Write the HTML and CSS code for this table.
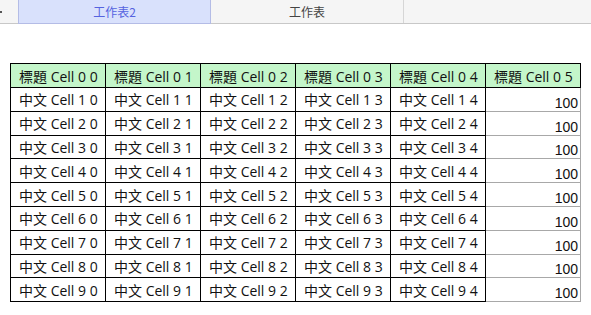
FILE: index.html
```html
<!DOCTYPE html>
<html lang="zh-Hant">
<head>
<meta charset="utf-8">
<link rel="stylesheet" href="styles.css">
</head>
<body>
<div class="tabbar">
  <div class="lead"><span class="dot"></span></div>
  <div class="tab active">工作表2</div>
  <div class="tab">工作表</div>
</div>
<div class="sheet">
<table class="grid">
  <thead>
    <tr><th>標題 Cell 0 0</th><th>標題 Cell 0 1</th><th>標題 Cell 0 2</th><th>標題 Cell 0 3</th><th>標題 Cell 0 4</th><th>標題 Cell 0 5</th></tr>
  </thead>
  <tbody>
    <tr><td>中文 Cell 1 0</td><td>中文 Cell 1 1</td><td>中文 Cell 1 2</td><td>中文 Cell 1 3</td><td>中文 Cell 1 4</td><td class="num">100</td></tr>
    <tr><td>中文 Cell 2 0</td><td>中文 Cell 2 1</td><td>中文 Cell 2 2</td><td>中文 Cell 2 3</td><td>中文 Cell 2 4</td><td class="num">100</td></tr>
    <tr><td>中文 Cell 3 0</td><td>中文 Cell 3 1</td><td>中文 Cell 3 2</td><td>中文 Cell 3 3</td><td>中文 Cell 3 4</td><td class="num">100</td></tr>
    <tr><td>中文 Cell 4 0</td><td>中文 Cell 4 1</td><td>中文 Cell 4 2</td><td>中文 Cell 4 3</td><td>中文 Cell 4 4</td><td class="num">100</td></tr>
    <tr><td>中文 Cell 5 0</td><td>中文 Cell 5 1</td><td>中文 Cell 5 2</td><td>中文 Cell 5 3</td><td>中文 Cell 5 4</td><td class="num">100</td></tr>
    <tr><td>中文 Cell 6 0</td><td>中文 Cell 6 1</td><td>中文 Cell 6 2</td><td>中文 Cell 6 3</td><td>中文 Cell 6 4</td><td class="num">100</td></tr>
    <tr><td>中文 Cell 7 0</td><td>中文 Cell 7 1</td><td>中文 Cell 7 2</td><td>中文 Cell 7 3</td><td>中文 Cell 7 4</td><td class="num">100</td></tr>
    <tr><td>中文 Cell 8 0</td><td>中文 Cell 8 1</td><td>中文 Cell 8 2</td><td>中文 Cell 8 3</td><td>中文 Cell 8 4</td><td class="num">100</td></tr>
    <tr><td>中文 Cell 9 0</td><td>中文 Cell 9 1</td><td>中文 Cell 9 2</td><td>中文 Cell 9 3</td><td>中文 Cell 9 4</td><td class="num">100</td></tr>
  </tbody>
</table>
</div>
</body>
</html>
```
FILE: styles.css
```css
html, body {
  margin: 0;
  padding: 0;
  background: #ffffff;
}
body {
  font-family: "Open Sans", "Noto Sans CJK TC", sans-serif;
  color: #111111;
}
.tabbar {
  display: flex;
  height: 23px;
  background: #f5f5f5;
  border-bottom: 1px solid #c8c8c8;
}
.lead {
  width: 18px;
  display: flex;
  align-items: center;
}
.dot {
  width: 2px;
  height: 2px;
  background: #555555;
}
.tab {
  width: 192px;
  border-right: 1px solid #d6d6d6;
  display: flex;
  align-items: center;
  justify-content: center;
  font-family: "Noto Sans CJK TC", "Open Sans", sans-serif;
  font-size: 12px;
  color: #444444;
}
.tab.active {
  width: 191px;
  background: #d9e1fc;
  border-left: 1px solid #b4bce6;
  border-right: 1px solid #b4bce6;
  border-bottom: 1px solid #b4bce6;
  margin-bottom: -1px;
  color: #5563e0;
}
.sheet {
  padding: 39px 10px 0 10px;
}
.grid {
  width: 571px;
  table-layout: fixed;
  border-collapse: collapse;
  font-size: 14px;
}
.grid th,
.grid td {
  border: 1px solid #000000;
  padding: 0 8px;
  text-align: left;
  font-weight: normal;
  white-space: nowrap;
  overflow: hidden;
  vertical-align: middle;
}
.grid thead tr {
  height: 24px;
}
.grid tbody tr {
  height: 23.8px;
}
.grid th {
  background: #c4f6ca;
}
.grid td.num {
  border-color: #a8a8a8;
  text-align: right;
  font-family: "Liberation Sans", Arial, sans-serif;
  font-size: 14px;
  vertical-align: bottom;
  padding: 0 2px 0 0;
  line-height: 16px;
}
```
